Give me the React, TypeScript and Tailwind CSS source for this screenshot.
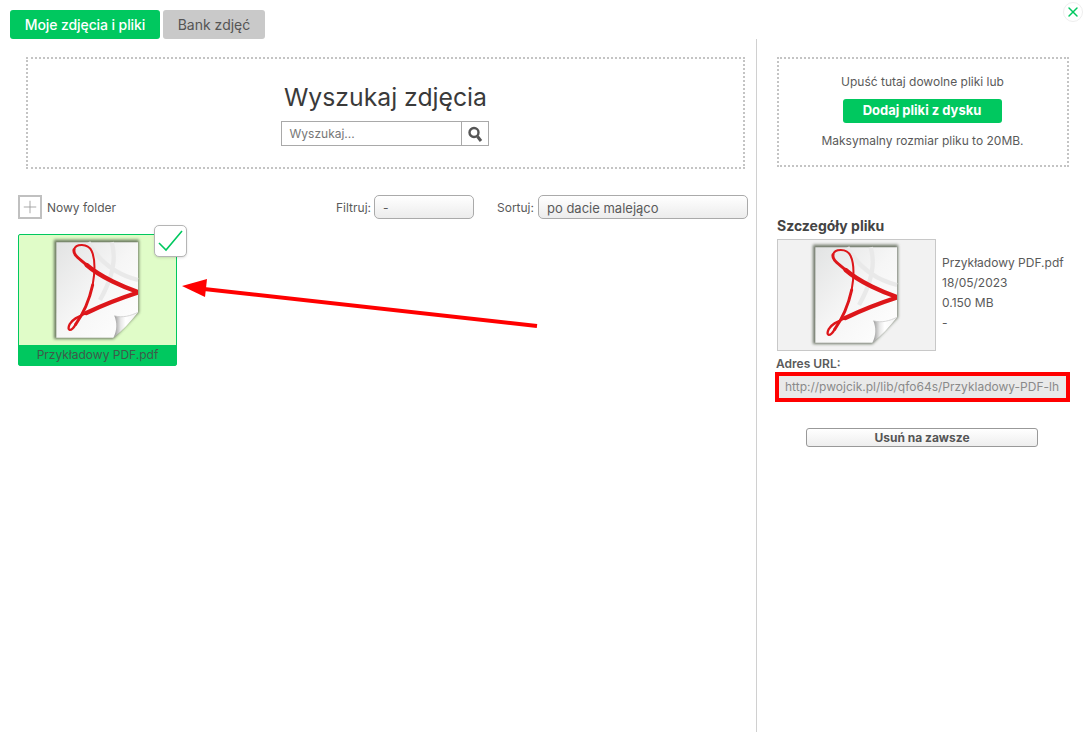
import React from 'react';
import { X, Plus } from 'lucide-react';

const PdfIcon = ({ id }: { id: string }) => (
    <svg width="105" height="110" viewBox="0 0 315 330" className="block">
        <defs>
            <linearGradient id={`${id}-page`} x1="0" y1="0" x2="1" y2="1">
                <stop offset="0" stopColor="#e2e3e3" />
                <stop offset="0.5" stopColor="#f6f6f6" />
                <stop offset="1" stopColor="#ffffff" />
            </linearGradient>
            <linearGradient id={`${id}-curl`} x1="0" y1="0" x2="1" y2="0">
                <stop offset="0" stopColor="#8f8f8f" />
                <stop offset="0.3" stopColor="#e8e8e8" />
                <stop offset="0.5" stopColor="#ffffff" />
                <stop offset="1" stopColor="#f2f2f2" />
            </linearGradient>
            <filter id={`${id}-shadow`} x="-10%" y="-10%" width="120%" height="120%">
                <feGaussianBlur stdDeviation="4" />
            </filter>
            <clipPath id={`${id}-clip`}>
                <path d="M34 22 H279 V232 Q250 262 205 308 H34 Z" />
            </clipPath>
        </defs>
        <path d="M27 14 H282 V232 L205 312 H27 Z" fill="#4f5a46" opacity="0.8" filter={`url(#${id}-shadow)`} />
        <path d="M34 22 H279 V232 Q250 262 205 308 H34 Z" fill={`url(#${id}-page)`} />
        <path d="M200 22 Q222 95 165 195 M130 22 Q180 110 279 135" fill="none" stroke="#e9e9e9" strokeWidth="13" />
        <g fill="none" stroke="#dd161a" strokeLinecap="round" clipPath={`url(#${id}-clip)`}>
            <path d="M300 178 C235 158 165 125 125 90" strokeWidth="13" />
            <path d="M125 90 C100 68 84 60 87 44" strokeWidth="9" />
            <path d="M87 44 C92 26 128 24 140 48 C150 70 151 105 143 150" strokeWidth="6" />
            <path d="M143 150 C133 195 112 240 92 268" strokeWidth="9" />
            <path d="M92 268 C78 292 64 288 74 268 C82 252 102 244 124 234" strokeWidth="7" />
            <path d="M124 234 C170 212 235 186 300 166" strokeWidth="13" />
        </g>
        <path d="M205 308 C217 285 216 262 208 242 C232 250 258 242 279 232 C255 262 232 288 205 308 Z" fill={`url(#${id}-curl)`} />
        <path d="M208 242 C232 250 258 242 279 232" fill="none" stroke="#c4c4c4" strokeWidth="2" />
    </svg>
);

const App = () => {
    return (
        <div className="relative w-[1083px] h-[732px] overflow-hidden bg-white font-['Inter',sans-serif] text-[#5a5a5a]">
            <div className="flex gap-[3px] pl-[10px] pt-[10px] h-[39px] box-content">
                <button className="w-[150px] h-[29px] rounded-[3px] bg-[#00c85f] text-white text-sm font-medium tracking-[-0.1px]">Moje zdjęcia i pliki</button>
                <button className="w-[102px] h-[29px] rounded-[3px] bg-[#c9c9c9] text-[#555] text-sm">Bank zdjęć</button>
            </div>

            <div className="flex h-[693px] -mt-[10px]">
                <div className="w-[757px] shrink-0 border-r border-[#d0d0d0] pl-[18px] pr-[8px] pt-[18px]">
                    <div className="ml-[8px] w-[719px] h-[112px] border-2 border-dotted border-[#c4c4c4] flex flex-col items-center">
                        <h1 className="mt-[22px] text-[24.75px] leading-[32px] text-[#3a3a3a]">Wyszukaj zdjęcia</h1>
                        <div className="mt-[8px] -ml-[2px] flex w-[208px] h-[25px] border border-[#a9a9a9]">
                            <span className="flex-1 pl-2 text-xs leading-[23px] text-[#777]">Wyszukaj...</span>
                            <span className="w-[27px] border-l border-[#a9a9a9] flex items-center justify-center">
                                <svg width="16" height="16" viewBox="0 0 16 16" fill="none" stroke="#555">
                                    <circle cx="7" cy="6.5" r="4.5" strokeWidth="2.4" />
                                    <path d="M10.5 10.5 L14 15" strokeWidth="3" />
                                </svg>
                            </span>
                        </div>
                    </div>

                    <div className="mt-[26px] flex items-center h-[24px]">
                        <span className="w-[24px] h-[24px] border-2 border-[#c0c0c0] flex items-center justify-center">
                            <Plus size={22} strokeWidth={1} className="text-[#999]" />
                        </span>
                        <span className="ml-[5px] mt-[1px] text-xs">Nowy folder</span>
                        <span className="ml-[220px] mt-[1px] text-xs">Filtruj:</span>
                        <span className="ml-[3px] w-[100px] h-[24px] rounded-[5px] border border-[#aaa] bg-gradient-to-b from-white to-[#ececec] pl-2 text-xs leading-[23px]">-</span>
                        <span className="ml-[23px] mt-[1px] text-xs">Sortuj:</span>
                        <span className="ml-[4px] w-[210px] h-[24px] rounded-[5px] border border-[#aaa] bg-gradient-to-b from-white to-[#ececec] pl-2 text-[13px] leading-[24px]">po dacie malejąco</span>
                    </div>

                    <div className="relative mt-[15px] w-[159px] h-[132px] rounded-[2px] border border-[#00c85f] bg-[#e0fcc8] flex flex-col">
                        <div className="flex-1 flex justify-center overflow-hidden">
                            <PdfIcon id="tile" />
                        </div>
                        <div className="h-[20px] bg-[#00c85f] text-center text-xs leading-[20px] text-[#3f5a4a]">Przykładowy PDF.pdf</div>
                        <span className="absolute -right-[11px] -top-[10px] w-[33px] h-[32px] rounded-[5px] border border-[#b5b5b5] bg-white flex items-center justify-center shadow-sm">
                            <svg width="25" height="22" viewBox="0 0 25 22" fill="none" stroke="#00c85f" strokeWidth="1.6">
                                <path d="M1 13 L8 20 L24 1" />
                            </svg>
                        </span>
                    </div>
                </div>

                <div className="flex-1 pl-[20px] pt-[18px]">
                    <div className="w-[292px] h-[110px] border-2 border-dotted border-[#c4c4c4] flex flex-col items-center text-xs">
                        <p className="mt-[14px] -ml-[1px] leading-[18px]">Upuść tutaj dowolne pliki lub</p>
                        <button className="mt-[8px] -ml-[2px] w-[159px] h-[24px] rounded-[3px] bg-[#00c85f] text-white text-[13px] font-bold">Dodaj pliki z dysku</button>
                        <p className="mt-[9px] -ml-[1px] leading-[18px]">Maksymalny rozmiar pliku to 20MB.</p>
                    </div>

                    <h2 className="mt-[49px] text-sm leading-[20px] font-bold text-[#444]">Szczegóły pliku</h2>
                    <div className="mt-[3px] flex">
                        <div className="w-[159px] h-[112px] border border-[#c8c8c8] bg-[#f2f2f2] flex justify-center">
                            <PdfIcon id="detail" />
                        </div>
                        <div className="ml-[6px] mt-[14px] text-xs leading-[20px]">
                            <p>Przykładowy PDF.pdf</p>
                            <p>18/05/2023</p>
                            <p>0.150 MB</p>
                            <p>-</p>
                        </div>
                    </div>
                    <p className="mt-[5px] -ml-[1px] text-xs leading-[16px] font-semibold">Adres URL:</p>
                    <div className="-ml-[2px] w-[295px] h-[30px] border-[4px] border-[#ff0000] bg-[#e9e9e9] px-[6px] text-xs leading-[22px] text-[#8a8a8a] whitespace-nowrap overflow-hidden">http://pwojcik.pl/lib/qfo64s/Przykladowy-PDF-lh</div>
                    <button className="mt-[26px] ml-[29px] block w-[232px] h-[19px] rounded-[3px] border border-[#999] bg-gradient-to-b from-white to-[#eee] text-xs font-bold text-[#555]">Usuń na zawsze</button>
                </div>
            </div>

            <span className="absolute right-0 top-[2px] w-[20px] h-[20px] rounded-full border border-[#eee] bg-white flex items-center justify-center">
                <X size={16} strokeWidth={2.2} className="text-[#00c85f]" />
            </span>

            <svg className="absolute left-0 top-0 pointer-events-none" width="1083" height="732">
                <path d="M537 326 L204 289" stroke="#ff0000" strokeWidth="4" fill="none" />
                <path d="M182 286 L207 279 L205 297 Z" fill="#ff0000" />
            </svg>
        </div>
    );
};

export default App;
